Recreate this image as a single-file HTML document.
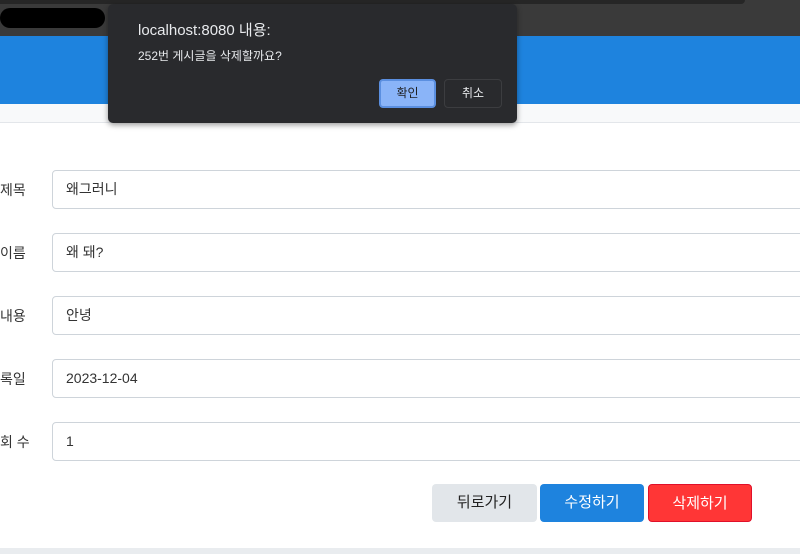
<!DOCTYPE html>
<html><head><meta charset="utf-8"><style>
body{margin:0;width:800px;height:554px;overflow:hidden;background:#fff;font-family:"Liberation Sans","Noto Sans CJK KR",sans-serif;position:relative}
.top{position:absolute;left:0;top:0;width:800px;height:36px;background:#3a3a3a}
.top2{position:absolute;left:0;top:0;width:745px;height:4px;background:#262626;border-radius:0 0 4px 0}
.blob{position:absolute;left:0;top:8px;width:105px;height:20px;background:#000;border-radius:10px}
.blue{position:absolute;left:0;top:36px;width:800px;height:68px;background:#1e83de}
.gray{position:absolute;left:0;top:104px;width:800px;height:18px;background:#f8f9fa;border-bottom:1px solid #e3e6ea}
.lab{position:absolute;left:0;font-size:14px;color:#333}
.inp{position:absolute;left:52px;width:760px;height:39px;border:1px solid #ced4da;border-radius:4px;box-sizing:border-box;font-size:14px;color:#333;padding:10px 13px;line-height:17px}
.btn{position:absolute;top:484px;height:38px;border-radius:4px;font-size:15px;text-align:center;line-height:38px;box-sizing:border-box}
.dlg{position:absolute;left:108px;top:4px;width:409px;height:119px;background:#292a2d;border-radius:5px;box-shadow:0 2px 6px rgba(0,0,0,.4);color:#e8eaed}
.bot{position:absolute;left:0;top:548px;width:800px;height:6px;background:#e9ecef}
</style></head><body>
<div class="top"></div><div class="top2"></div><div class="blob"></div>
<div class="blue"></div><div class="gray"></div>
<div class="lab" style="top:180px">제목</div><div class="inp" style="top:170px">왜그러니</div>
<div class="lab" style="top:243px">이름</div><div class="inp" style="top:233px">왜 돼?</div>
<div class="lab" style="top:306px">내용</div><div class="inp" style="top:296px">안녕</div>
<div class="lab" style="top:369px">록일</div><div class="inp" style="top:359px">2023-12-04</div>
<div class="lab" style="top:432px">회 수</div><div class="inp" style="top:422px">1</div>
<div class="btn" style="left:432px;width:105px;background:#e2e6ea;color:#222">뒤로가기</div>
<div class="btn" style="left:540px;width:104px;background:#1e83de;color:#fff">수정하기</div>
<div class="btn" style="left:648px;width:104px;background:#ff3636;color:#fff;border:1px solid #e0102a">삭제하기</div>
<div class="bot"></div>
<div class="dlg">
<div style="position:absolute;left:30px;top:15px;font-size:15px">localhost:8080 내용:</div>
<div style="position:absolute;left:30px;top:43px;font-size:12px">252번 게시글을 삭제할까요?</div>
<div style="position:absolute;left:271px;top:75px;width:57px;height:29px;background:#8ab4f8;border:2px solid #5b8fe0;border-radius:4px;box-sizing:border-box;color:#202124;font-size:12px;text-align:center;line-height:25px">확인</div>
<div style="position:absolute;left:336px;top:75px;width:58px;height:29px;border:1px solid #3c3d40;border-radius:4px;box-sizing:border-box;font-size:12px;text-align:center;line-height:27px">취소</div>
</div>
</body></html>
